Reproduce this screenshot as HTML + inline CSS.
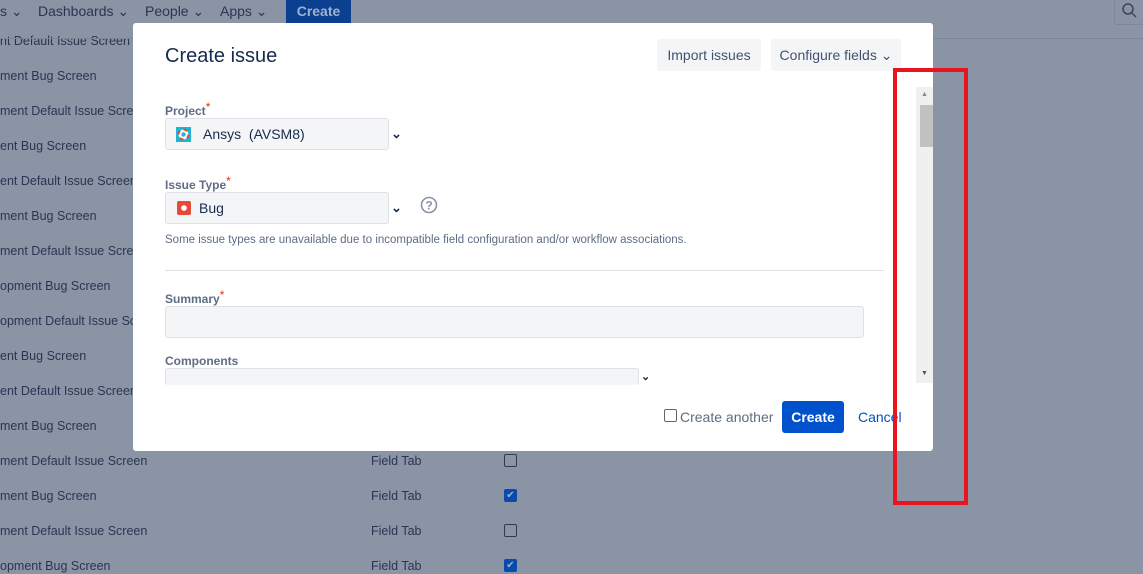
<!DOCTYPE html>
<html><head><style>
*{margin:0;padding:0;box-sizing:border-box}
body{width:1143px;height:574px;overflow:hidden;background:#8b94a5;font-family:"Liberation Sans",sans-serif;position:relative;color:#253858}
.nav{position:absolute;top:0;left:0;width:1143px;height:39px;border-bottom:1px solid #7d879a;z-index:2}
.nav span{position:absolute;top:3px;font-size:14px;color:#2a3552}
.navc{position:absolute;left:286px;top:0;width:65px;height:23px;background:#0b3f8f;color:#9fb1d1;font-size:14px;text-align:center;line-height:23px;font-weight:bold}
.search{position:absolute;left:1114px;top:-5px;width:40px;height:30px;border:1px solid #7d879a;border-radius:3px}
.row{position:absolute;left:0;font-size:12.5px;color:#2a3552;white-space:nowrap}
.ft{position:absolute;left:371px;font-size:12.5px;color:#2a3552}
.cb{position:absolute;left:504px;width:13px;height:13px;border:1px solid #2f3b55;border-radius:2px}
.cb.on{background:#0b4aad;border-color:#0b4aad;color:#9fb1d1;font-size:10px;text-align:center;line-height:12px}
.modal{position:absolute;left:133px;top:23px;width:800px;height:428px;background:#fff;border-radius:3px;z-index:3}
.m{position:absolute}
.lbl{font-size:12px;color:#5e6c84;font-weight:bold}
.lbl i{color:#de350b;font-style:normal;font-weight:normal;position:relative;top:-4px}
.inp{background:#f4f5f7;border:1px solid #dfe1e6;border-radius:3px}
.btn{background:#f4f5f7;border-radius:3px;font-size:14px;color:#42526e;text-align:center;line-height:32px;height:32px}
.chev{font-size:11px;color:#172b4d}
</style></head><body>
<div class="nav">
<span style="left:0">s ⌄</span>
<span style="left:38px">Dashboards ⌄</span>
<span style="left:145px">People ⌄</span>
<span style="left:220px">Apps ⌄</span>
<div class="navc">Create</div>
<div class="search"><svg width="18" height="18" style="position:absolute;left:6px;top:6px"><circle cx="7" cy="7" r="5" fill="none" stroke="#3a4560" stroke-width="1.5"/><line x1="11" y1="11" x2="15" y2="15" stroke="#3a4560" stroke-width="1.5"/></svg></div>
</div>
<div class="row" style="top:34px">nt Default Issue Screen</div>
<div class="row" style="top:69px">ment Bug Screen</div>
<div class="row" style="top:104px">ment Default Issue Screen</div>
<div class="row" style="top:139px">ent Bug Screen</div>
<div class="row" style="top:174px">ent Default Issue Screen</div>
<div class="row" style="top:209px">ment Bug Screen</div>
<div class="row" style="top:244px">ment Default Issue Screen</div>
<div class="row" style="top:279px">opment Bug Screen</div>
<div class="row" style="top:314px">opment Default Issue Screen</div>
<div class="row" style="top:349px">ent Bug Screen</div>
<div class="row" style="top:384px">ent Default Issue Screen</div>
<div class="row" style="top:419px">ment Bug Screen</div>
<div class="row" style="top:454px">ment Default Issue Screen</div>
<div class="row" style="top:489px">ment Bug Screen</div>
<div class="row" style="top:524px">ment Default Issue Screen</div>
<div class="row" style="top:559px">opment Bug Screen</div>
<div class="ft" style="top:454px">Field Tab</div><div class="cb" style="top:454px"></div>
<div class="ft" style="top:489px">Field Tab</div><div class="cb on" style="top:489px">✔</div>
<div class="ft" style="top:524px">Field Tab</div><div class="cb" style="top:524px"></div>
<div class="ft" style="top:559px">Field Tab</div><div class="cb on" style="top:559px">✔</div>

<div class="modal">
<div class="m" style="left:32px;top:22px;font-size:20px;color:#172b4d">Create issue</div>
<div class="m btn" style="left:524px;top:16px;width:104px">Import issues</div>
<div class="m btn" style="left:638px;top:16px;width:130px">Configure fields ⌄</div>
<div class="m lbl" style="left:32px;top:81px">Project<i>*</i></div>
<div class="m inp" style="left:32px;top:95px;width:224px;height:32px"></div>
<svg class="m" style="left:43px;top:104px" width="15" height="15"><rect width="15" height="15" fill="#19b6d6"/><circle cx="7.5" cy="7.5" r="5" fill="#fff"/><circle cx="7.5" cy="7.5" r="5" fill="none" stroke="#e5493a" stroke-width="2" stroke-dasharray="4 3.8"/><circle cx="7.5" cy="7.5" r="2.2" fill="#19b6d6"/></svg>
<div class="m" style="left:70px;top:103px;font-size:14px;color:#172b4d">Ansys&nbsp; (AVSM8)</div>
<div class="m chev" style="left:258px;top:103px;font-weight:bold;font-size:13px">⌄</div>
<div class="m lbl" style="left:32px;top:155px">Issue Type<i>*</i></div>
<div class="m inp" style="left:32px;top:169px;width:224px;height:32px"></div>
<svg class="m" style="left:44px;top:178px" width="14" height="14"><rect width="14" height="14" rx="2" fill="#e5493a"/><circle cx="7" cy="7" r="2.8" fill="#fff"/></svg>
<div class="m" style="left:66px;top:177px;font-size:14px;color:#172b4d">Bug</div>
<div class="m chev" style="left:258px;top:177px;font-weight:bold;font-size:13px">⌄</div>
<svg class="m" style="left:287px;top:173px" width="18" height="18"><circle cx="9" cy="9" r="7.5" fill="none" stroke="#8993a4" stroke-width="1.6"/><text x="9" y="13.5" font-size="12" font-weight="bold" text-anchor="middle" fill="#8993a4" font-family="Liberation Sans">?</text></svg>
<div class="m" style="left:32px;top:211px;font-size:11.5px;color:#5e6c84">Some issue types are unavailable due to incompatible field configuration and/or workflow associations.</div>
<div class="m" style="left:32px;top:247px;width:719px;height:1px;background:#dfe1e6"></div>
<div class="m lbl" style="left:32px;top:269px">Summary<i>*</i></div>
<div class="m inp" style="left:32px;top:283px;width:699px;height:32px"></div>
<div class="m lbl" style="left:32px;top:331px">Components</div>
<div class="m inp" style="left:32px;top:345px;width:474px;height:17px;border-bottom:none"></div>
<div class="m chev" style="left:508px;top:347px;font-weight:bold">⌄</div>
<div class="m" style="left:783px;top:64px;width:17px;height:296px;background:#f0f0f0"></div>
<div class="m" style="left:787px;top:82px;width:13px;height:42px;background:#c1c1c1"></div>
<div class="m" style="left:788px;top:68px;font-size:7px;color:#888">▲</div>
<div class="m" style="left:788px;top:347px;font-size:7px;color:#555">▼</div>
<div class="m" style="left:531px;top:386px;width:13px;height:13px;border:1px solid #666;border-radius:2px"></div>
<div class="m" style="left:547px;top:386px;font-size:14px;color:#5e6c84">Create another</div>
<div class="m" style="left:649px;top:378px;width:62px;height:32px;background:#0052cc;border-radius:3px;color:#fff;font-weight:bold;font-size:14px;text-align:center;line-height:32px">Create</div>
<div class="m" style="left:725px;top:386px;font-size:14px;color:#0052cc">Cancel</div>
</div>
<div style="position:absolute;left:893px;top:68px;width:75px;height:437px;border:4px solid #e8141e;z-index:4"></div>
</body></html>
